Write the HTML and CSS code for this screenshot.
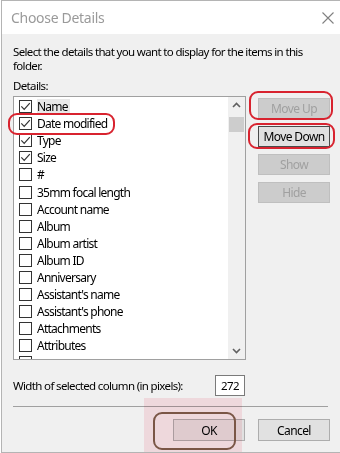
FILE: index.html
```
<!DOCTYPE html>
<html lang="en">
<head>
    <meta charset="UTF-8">
    <meta name="viewport" content="width=device-width, initial-scale=1.0">
    <title>Choose Details</title>
    <link rel="stylesheet" href="styles.css">
</head>
<body>
    <div class="dialog">
        <div class="titlebar">
            <span class="title">Choose Details</span>
            <svg class="close" width="12" height="12" viewBox="0 0 12 12">
                <path d="M0.5 0.5 L11.5 11.5 M11.5 0.5 L0.5 11.5" stroke="#808080" stroke-width="1.1" fill="none"/>
            </svg>
        </div>

        <div class="content">
            <p class="intro">Select the details that you want to display for the items in this folder.</p>
            <div class="label">Details:</div>

            <div class="main">
                <div class="listbox">
                    <div class="rows">
                        <div class="row"><span class="box checked"></span><span class="name focused">Name</span></div>
                        <div class="row"><span class="box checked"></span><span class="name">Date modified</span></div>
                        <div class="row"><span class="box checked"></span><span class="name">Type</span></div>
                        <div class="row"><span class="box checked"></span><span class="name">Size</span></div>
                        <div class="row"><span class="box"></span><span class="name">#</span></div>
                        <div class="row"><span class="box"></span><span class="name">35mm focal length</span></div>
                        <div class="row"><span class="box"></span><span class="name">Account name</span></div>
                        <div class="row"><span class="box"></span><span class="name">Album</span></div>
                        <div class="row"><span class="box"></span><span class="name">Album artist</span></div>
                        <div class="row"><span class="box"></span><span class="name">Album ID</span></div>
                        <div class="row"><span class="box"></span><span class="name">Anniversary</span></div>
                        <div class="row"><span class="box"></span><span class="name">Assistant's name</span></div>
                        <div class="row"><span class="box"></span><span class="name">Assistant's phone</span></div>
                        <div class="row"><span class="box"></span><span class="name">Attachments</span></div>
                        <div class="row"><span class="box"></span><span class="name">Attributes</span></div>
                        <div class="row"><span class="box"></span></div>
                    </div>
                    <div class="scrollbar">
                        <svg class="arrow" width="9" height="6" viewBox="0 0 9 6">
                            <path d="M1 5 L4.5 1.5 L8 5" stroke="#606060" stroke-width="1.6" fill="none"/>
                        </svg>
                        <div class="track"><div class="thumb"></div></div>
                        <svg class="arrow" width="9" height="6" viewBox="0 0 9 6">
                            <path d="M1 1 L4.5 4.5 L8 1" stroke="#606060" stroke-width="1.6" fill="none"/>
                        </svg>
                    </div>
                </div>

                <div class="side">
                    <button class="btn" disabled>Move Up</button>
                    <button class="btn active">Move Down</button>
                    <button class="btn" disabled>Show</button>
                    <button class="btn" disabled>Hide</button>
                </div>
            </div>

            <div class="width-row">
                <span class="width-label">Width of selected column (in pixels):</span>
                <span class="field">272</span>
            </div>

            <div class="separator"></div>

            <div class="footer">
                <button class="btn footer-btn">OK</button>
                <button class="btn footer-btn">Cancel</button>
            </div>
        </div>

        <!-- annotations drawn over the dialog -->
        <div class="glow"></div>
        <div class="mark mark-date"></div>
        <div class="mark mark-up"></div>
        <div class="mark mark-down"></div>
        <div class="mark mark-ok"></div>
    </div>
</body>
</html>
```

FILE: styles.css
```
body {
    margin: 0;
    font-family: "Noto Sans", "Open Sans", sans-serif;
    font-size: 11.5px;
    letter-spacing: -0.65px;
    color: #000;
    background: #fff;
}
.dialog {
    position: relative;
    width: 339px;
    height: 453px;
    margin-left: 1px;
    box-sizing: border-box;
    border-top: 1px solid #b4b4b4;
    border-left: 1px solid #b4b4b4;
    border-bottom: 1px solid #b4b4b4;
    background: #f0f0f0;
    overflow: hidden;
}
.titlebar {
    height: 33px;
    background: #fff;
    display: flex;
    align-items: center;
    justify-content: space-between;
    padding: 0 6px 0 9px;
}
.title {
    font-size: 14px;
    letter-spacing: -0.3px;
    color: #9a9a9a;
}
.content {
    padding: 11px 10px 0 11px;
}
.intro {
    margin: 0;
    line-height: 14px;
}
.label {
    margin-top: 6px;
    line-height: 14px;
}
.main {
    display: flex;
    gap: 12px;
    margin-top: 3px;
}
.listbox {
    width: 233px;
    height: 264px;
    box-sizing: border-box;
    border: 1px solid #a0a0a0;
    background: #fff;
    display: flex;
}
.rows {
    flex: 1;
    overflow: hidden;
    padding-top: 1px;
}
.row {
    height: 17.1px;
    display: flex;
    align-items: center;
    padding-left: 5px;
    font-size: 12px;
    letter-spacing: -0.75px;
}
.box {
    width: 13px;
    height: 13px;
    box-sizing: border-box;
    border: 1px solid #333;
    margin-right: 5px;
    flex: none;
    background: #fff;
}
.box.checked {
    background: #fff url("data:image/svg+xml,%3Csvg xmlns='http://www.w3.org/2000/svg' width='11' height='11'%3E%3Cpath d='M1.3 5.3 L4.2 8.3 L9.8 2.2' stroke='%23333' stroke-width='1.2' fill='none'/%3E%3C/svg%3E") no-repeat center;
}
.name {
    line-height: 15px;
    padding-right: 2px;
}
.name.focused {
    background: #e8e8e8;
}
.scrollbar {
    width: 17px;
    background: #f0f0f0;
    display: flex;
    flex-direction: column;
    align-items: center;
}
.arrow {
    flex: none;
    margin: 5px 0;
}
.track {
    flex: 1;
    width: 100%;
}
.thumb {
    margin: 4px 1px 0;
    height: 15px;
    background: #cdcdcd;
}
.side {
    display: flex;
    flex-direction: column;
    gap: 7px;
    padding-top: 2px;
}
.btn {
    width: 72px;
    height: 21px;
    padding: 0;
    font-family: inherit;
    font-size: 12px;
    letter-spacing: -0.6px;
    background: #e1e1e1;
    border: 1px solid #adadad;
    color: #000;
}
.btn:disabled {
    background: #cccccc;
    border-color: #bfbfbf;
    color: #a0a0a0;
}
.btn.active {
    border-color: #4a4a4a;
}
.width-row {
    display: flex;
    align-items: center;
    margin-top: 15px;
    height: 21px;
}
.width-label {
    width: 202px;
    white-space: nowrap;
}
.field {
    width: 30px;
    height: 21px;
    box-sizing: border-box;
    border: 1px solid #7a7a7a;
    background: #fff;
    text-align: center;
    line-height: 19px;
}
.separator {
    margin-top: 10px;
    width: 315px;
    border-top: 1px solid #a0a0a0;
}
.footer {
    display: flex;
    justify-content: flex-end;
    gap: 13px;
    margin-top: 12px;
}
.footer-btn {
    height: 22px;
}
.glow {
    position: absolute;
    left: 142px;
    top: 397px;
    width: 98px;
    height: 60px;
    background: #fde6ea;
    mix-blend-mode: multiply;
}
.mark {
    position: absolute;
    border: 2px solid #d8232f;
    border-radius: 9px;
    box-sizing: border-box;
}
.mark-date {
    left: 6px;
    top: 112px;
    width: 107px;
    height: 22px;
}
.mark-up {
    left: 247px;
    top: 90px;
    width: 84px;
    height: 29px;
}
.mark-down {
    left: 246px;
    top: 122px;
    width: 87px;
    height: 26px;
}
.mark-ok {
    left: 151px;
    top: 411px;
    width: 83px;
    height: 38px;
    border-color: #7a5646;
}
```
